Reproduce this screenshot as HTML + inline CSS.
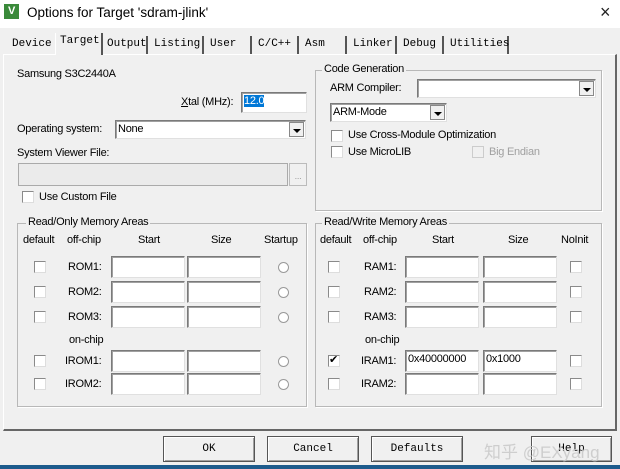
<!DOCTYPE html>
<html><head><style>
*{margin:0;padding:0;box-sizing:border-box}
body{width:620px;height:469px;background:#f0f0f0;position:relative;overflow:hidden;font-family:"Liberation Sans",sans-serif;font-size:11px;letter-spacing:-0.25px;color:#000}
.a{position:absolute;white-space:nowrap}
.tab{position:absolute;top:36px;height:18px;font-family:"Liberation Mono",monospace;font-size:11px;letter-spacing:0;padding:2px 0 0 4px;border-right:2px solid #555;background:#f0f0f0}
.in{position:absolute;background:#fff;border:1px solid #7a7a7a;border-right-color:#e0e0e0;border-bottom-color:#e0e0e0;box-shadow:inset 1px 1px 0 #a0a0a0;padding:2px 0 0 2px}
.cb{position:absolute;width:12px;height:12px;background:#fff;border:1px solid #8a8a8a;border-right-color:#ddd;border-bottom-color:#ddd}
.rd{position:absolute;width:11px;height:11px;border-radius:50%;border:1px solid #999;background:#fff}
.grp{position:absolute;border:1px solid #b8b8b8;box-shadow:1px 1px 0 #fff}
.gl{position:absolute;background:#f0f0f0;padding:0 2px;top:-8px}
.dd{position:absolute;width:15px;border:1px solid #888;background:#f0f0f0;top:1px;right:1px;bottom:1px}
.dd:after{content:"";position:absolute;left:3px;top:6px;border:4px solid transparent;border-top:4px solid #000}
.btn{position:absolute;top:436px;height:26px;width:92px;border:1px solid #555;background:#f0f0f0;box-shadow:inset 1px 1px 0 #fff,inset -1px -1px 0 #a0a0a0;font-family:"Liberation Mono",monospace;font-size:11px;letter-spacing:0;text-align:center;line-height:24px}
</style></head><body>
<div class="a" style="left:0;top:0;width:620px;height:28px;background:#fff"></div>
<div class="a" style="left:4px;top:4px;width:15px;height:15px;background:#3a8a3a;color:#fff;font-size:11px;font-weight:bold;text-align:center;line-height:15px">V</div>
<div class="a" style="left:27px;top:5px;font-size:13.5px;letter-spacing:0">Options for Target 'sdram-jlink'</div>
<div class="a" style="left:600px;top:2px;font-size:18px;color:#222">×</div>

<div class="a" style="left:3px;top:54px;width:614px;height:377px;border:1px solid #fff;border-right:2px solid #666;border-bottom:2px solid #666"></div>
<div class="tab" style="left:8px;width:45px;border-right:none">Device</div>
<div class="tab" style="left:55px;top:33px;height:22px;width:48px;border-left:1px solid #fff;">Target</div>
<div class="tab" style="left:103px;width:45px">Output</div>
<div class="tab" style="left:150px;width:54px">Listing</div>
<div class="tab" style="left:206px;width:46px">User</div>
<div class="tab" style="left:254px;width:45px">C/C++</div>
<div class="tab" style="left:301px;width:46px">Asm</div>
<div class="tab" style="left:349px;width:48px">Linker</div>
<div class="tab" style="left:399px;width:45px">Debug</div>
<div class="tab" style="left:446px;width:63px">Utilities</div>

<div class="a" style="left:17px;top:68px">Samsung S3C2440A</div>
<div class="a" style="left:181px;top:96px"><u>X</u>tal (MHz):</div>
<div class="in" style="left:241px;top:92px;width:66px;height:21px"><span style="background:#0078d7;color:#fff">12.0</span></div>
<div class="a" style="left:17px;top:123px">Operating system:</div>
<div class="in" style="left:115px;top:120px;width:191px;height:19px;padding-top:2px">None<div class="dd"></div></div>
<div class="a" style="left:17px;top:147px">System Viewer File:</div>
<div class="a" style="left:18px;top:163px;width:270px;height:23px;border:1px solid #aaa;background:#ebebeb"></div>
<div class="a" style="left:289px;top:163px;width:18px;height:23px;border:1px solid #bbb;background:#f0f0f0;color:#999;font-size:9px;text-align:center;line-height:24px">...</div>
<div class="cb" style="left:22px;top:191px"></div>
<div class="a" style="left:39px;top:191px">Use Custom File</div>

<div class="grp" style="left:315px;top:70px;width:287px;height:141px"><div class="gl" style="left:6px">Code Generation</div></div>
<div class="a" style="left:330px;top:82px">ARM Compiler:</div>
<div class="in" style="left:417px;top:79px;width:179px;height:19px"><div class="dd"></div></div>
<div class="in" style="left:330px;top:103px;width:117px;height:19px">ARM-Mode<div class="dd"></div></div>
<div class="cb" style="left:331px;top:130px"></div>
<div class="a" style="left:348px;top:129px">Use Cross-Module Optimization</div>
<div class="cb" style="left:331px;top:146px"></div>
<div class="a" style="left:348px;top:146px">Use MicroLIB</div>
<div class="cb" style="left:472px;top:146px;background:#f0f0f0;border-color:#ccc"></div>
<div class="a" style="left:489px;top:146px;color:#a0a0a0">Big Endian</div>

<div class="grp" style="left:17px;top:223px;width:290px;height:184px"><div class="gl" style="left:8px">Read/Only Memory Areas</div></div>
<div class="a" style="left:23px;top:234px">default</div>
<div class="a" style="left:67px;top:234px">off-chip</div>
<div class="a" style="left:138px;top:234px">Start</div>
<div class="a" style="left:211px;top:234px">Size</div>
<div class="a" style="left:264px;top:234px">Startup</div>
<div class="a" style="left:69px;top:334px">on-chip</div>

<div class="grp" style="left:315px;top:223px;width:287px;height:184px"><div class="gl" style="left:6px">Read/Write Memory Areas</div></div>
<div class="a" style="left:320px;top:234px">default</div>
<div class="a" style="left:363px;top:234px">off-chip</div>
<div class="a" style="left:432px;top:234px">Start</div>
<div class="a" style="left:508px;top:234px">Size</div>
<div class="a" style="left:561px;top:234px">NoInit</div>
<div class="a" style="left:365px;top:334px">on-chip</div>

<div id="rows"></div>
<script>
var ys=[256,281,306,350,373],L=["ROM1:","ROM2:","ROM3:","IROM1:","IROM2:"],R=["RAM1:","RAM2:","RAM3:","IRAM1:","IRAM2:"],h="";
ys.forEach(function(y,i){
h+='<div class="cb" style="left:34px;top:'+(y+5)+'px"></div>';
h+='<div class="a" style="left:'+(i<3?68:65)+'px;top:'+(y+5)+'px">'+L[i]+'</div>';
h+='<div class="in" style="left:111px;top:'+y+'px;width:74px;height:22px"></div>';
h+='<div class="in" style="left:187px;top:'+y+'px;width:74px;height:22px"></div>';
h+='<div class="rd" style="left:278px;top:'+(y+6)+'px"></div>';
h+='<div class="cb" style="left:328px;top:'+(y+5)+'px">'+(i==3?'<span style="position:absolute;left:0;top:-3px;font-size:11px">✔</span>':'')+'</div>';
h+='<div class="a" style="left:'+(i<3?364:361)+'px;top:'+(y+5)+'px">'+R[i]+'</div>';
h+='<div class="in" style="left:405px;top:'+y+'px;width:74px;height:22px">'+(i==3?'0x40000000':'')+'</div>';
h+='<div class="in" style="left:483px;top:'+y+'px;width:74px;height:22px">'+(i==3?'0x1000':'')+'</div>';
h+='<div class="cb" style="left:570px;top:'+(y+5)+'px"></div>';
});
document.getElementById("rows").innerHTML=h;
</script>

<div class="btn" style="left:163px">OK</div>
<div class="btn" style="left:267px">Cancel</div>
<div class="btn" style="left:371px">Defaults</div>
<div class="btn" style="left:531px;width:81px">Help</div>
<div class="a" style="left:484px;top:438px;font-size:17px;letter-spacing:0;color:rgba(200,200,200,0.85);font-family:'Liberation Sans','Noto Sans CJK SC',sans-serif">知乎 @EXyang</div>
<div class="a" style="left:0;top:465px;width:620px;height:4px;background:#1d5b8c"></div>
</body></html>
